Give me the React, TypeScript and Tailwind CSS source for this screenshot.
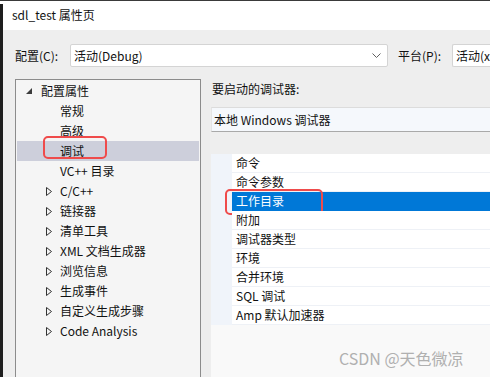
import React from "react";

const font = { fontFamily: '"Noto Sans CJK SC", "Noto Sans", sans-serif' };

function OpenTri() {
  return (
    <svg width="6" height="9" viewBox="0 0 6 9" className="shrink-0">
      <path d="M0.5 0.5 L5.5 4.5 L0.5 8.5 Z" fill="none" stroke="#333" strokeWidth="1" />
    </svg>
  );
}

function TreeRow({ label, level, tri, selected }: { label: string; level: number; tri?: "open" | "closed"; selected?: boolean }) {
  return (
    <div className={`relative h-[20px] flex items-center mx-[1px] ${selected ? "bg-[#cdcfdb]" : ""}`}>
      {level === 0 ? (
        <div className="w-[24px] shrink-0 flex justify-end pr-[9px]">
          <svg width="6" height="6" viewBox="0 0 6 6">
            <polygon points="6,0 6,6 0,6" fill="#3c3c3c" />
          </svg>
        </div>
      ) : (
        <div className="w-[43px] shrink-0 flex justify-end pr-[8px]">{tri === "closed" ? <OpenTri /> : null}</div>
      )}
      <span>{label}</span>
      {selected && (
        <div className="absolute left-[26px] top-[-5px] w-[64px] h-[23px] border-[2.5px] border-[#ef4b4b] rounded-[5px]" />
      )}
    </div>
  );
}

const gridRows = ["命令", "命令参数", "工作目录", "附加", "调试器类型", "环境", "合并环境", "SQL 调试", "Amp 默认加速器"];

export default function App() {
  return (
    <div className="w-[490px] h-[377px] overflow-hidden flex bg-[#1f1f1f] text-[12px] text-[#111]" style={font}>
      <div className="w-[3px] shrink-0 flex flex-col">
        <div className="h-[4px] bg-white border-t border-[#3a3a3a]" />
        <div className="flex-1 bg-[#1e1e1e]" />
      </div>
      <div className="flex-1 min-w-0 flex flex-col bg-[#eeeeee] relative">
        <div className="h-[30px] shrink-0 bg-white border-t border-[#3a3a3a] pl-[9px] flex items-center pb-[1px]">
          sdl_test 属性页
        </div>
        <div className="mt-[14px] h-[23px] shrink-0 flex items-center">
          <div className="w-[67px] shrink-0 pl-[12px]">配置(C):</div>
          <div className="w-[318px] shrink-0 h-[23px] bg-white border border-[#d4d4d4] rounded-[2px] flex items-center justify-between pl-[3px] pr-[6px]">
            <span>活动(Debug)</span>
            <svg width="9" height="6" viewBox="0 0 9 6">
              <path d="M0.5 0.5 L4.5 4.5 L8.5 0.5" fill="none" stroke="#606060" strokeWidth="1" />
            </svg>
          </div>
          <div className="w-[64px] shrink-0 pl-[10px]">平台(P):</div>
          <div className="flex-1 min-w-0 h-[23px] bg-white border border-[#d4d4d4] border-r-0 rounded-l-[2px] flex items-center pl-[3px] overflow-hidden whitespace-nowrap">
            <span>活动(x</span>
          </div>
        </div>
        <div className="flex-1 flex mt-[12px] min-h-0">
          <div className="ml-[12px] w-[186px] shrink-0 border border-[#8c8c8c] bg-[#f5f5f5] pt-[1px] -mb-[4px]">
            <TreeRow label="配置属性" level={0} />
            <TreeRow label="常规" level={1} />
            <TreeRow label="高级" level={1} />
            <TreeRow label="调试" level={1} selected />
            <TreeRow label="VC++ 目录" level={1} />
            <TreeRow label="C/C++" level={1} tri="closed" />
            <TreeRow label="链接器" level={1} tri="closed" />
            <TreeRow label="清单工具" level={1} tri="closed" />
            <TreeRow label="XML 文档生成器" level={1} tri="closed" />
            <TreeRow label="浏览信息" level={1} tri="closed" />
            <TreeRow label="生成事件" level={1} tri="closed" />
            <TreeRow label="自定义生成步骤" level={1} tri="closed" />
            <TreeRow label="Code Analysis" level={1} tri="closed" />
          </div>
          <div className="flex-1 flex flex-col pl-[10px] min-w-0">
            <div className="h-[20px] flex items-center pl-[1px]">要启动的调试器:</div>
            <div className="mt-[8px] h-[25px] bg-[#f5f8fc] border-t border-[#dcdcdc] border-l border-l-[#e4e4e4] border-b border-b-[#a9a9a9] flex items-center pl-[2px] whitespace-nowrap">
              本地 Windows 调试器
            </div>
            <div className="mt-[22px] flex-1 flex flex-col bg-[#f9f9f9]">
              {gridRows.map((r, i) => (
                <div key={r} className="h-[19px] flex">
                  <div className="w-[21px] shrink-0 bg-[#f0f4fa]" />
                  <div
                    className={`relative flex-1 flex items-center pl-[4px] border-b whitespace-nowrap ${
                      i === 2 ? "bg-[#0078d7] text-white border-[#0078d7]" : "bg-white border-[#eef1f6]"
                    }`}
                  >
                    {r}
                    {i === 2 && (
                      <div className="absolute left-[-7px] top-[-3px] w-[98px] h-[26px] border-[2.5px] border-[#ef4b4b] rounded-[5px]" />
                    )}
                  </div>
                </div>
              ))}
            </div>
          </div>
        </div>
        <div className="absolute left-[336px] top-[347px] text-[16px] text-[#b0b0b0] whitespace-nowrap leading-[22px]">
          CSDN @天色微凉
        </div>
      </div>
    </div>
  );
}
